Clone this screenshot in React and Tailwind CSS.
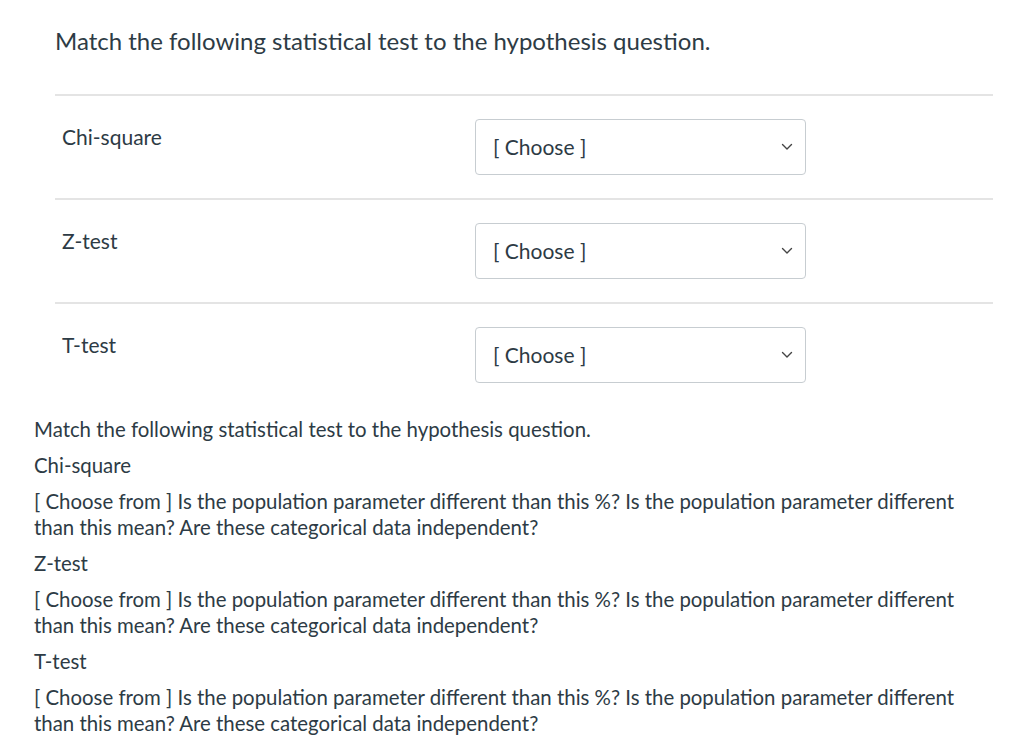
import React from "react";

const tests = ["Chi-square", "Z-test", "T-test"];

const options =
  "Is the population parameter different than this %? Is the population parameter different than this mean? Are these categorical data independent?";

const Chevron = () => (
  <svg width="12" height="8" viewBox="0 0 12 8" fill="none">
    <path d="M1.5 1.5 L6 6 L10.5 1.5" stroke="#444" strokeWidth="1.4" strokeLinecap="round" strokeLinejoin="round" />
  </svg>
);

const App = () => {
  return (
    <div className="w-[1024px] h-[748px] bg-white text-[#2d3b45] overflow-hidden" style={{ fontFamily: "Lato, 'Noto Sans', sans-serif" }}>
      <div className="pl-[55px] pr-[31px] pt-[26px]">
        <h1 className="text-[24px] leading-[30px] text-[#2d3b45] pb-[38px]">
          Match the following statistical test to the hypothesis question.
        </h1>

        {tests.map((t) => (
          <div key={t} className="border-t-2 border-[#e4e4e4] h-[104px] flex items-start">
            <div className="w-[420px] pl-[7px] pt-[29px] text-[21px] leading-[24px]">{t}</div>
            <div className="pt-[23px]">
              <div className="w-[331px] h-[56px] border border-[#c7cdd1] rounded-[4px] flex items-center justify-between pl-[17px] pr-[12px]">
                <span className="text-[21px]">[ Choose ]</span>
                <Chevron />
              </div>
            </div>
          </div>
        ))}
      </div>

      <div className="pl-[34px] pr-[45px] mt-[10px] text-[20.4px] leading-[26px] text-[#2d3b45]">
        <p className="mb-[10px]">Match the following statistical test to the hypothesis question.</p>
        {tests.map((t) => (
          <div key={t}>
            <p className="mb-[10px]">{t}</p>
            <p className="mb-[10px]">[ Choose from ] {options}</p>
          </div>
        ))}
      </div>
    </div>
  );
};

export default App;
